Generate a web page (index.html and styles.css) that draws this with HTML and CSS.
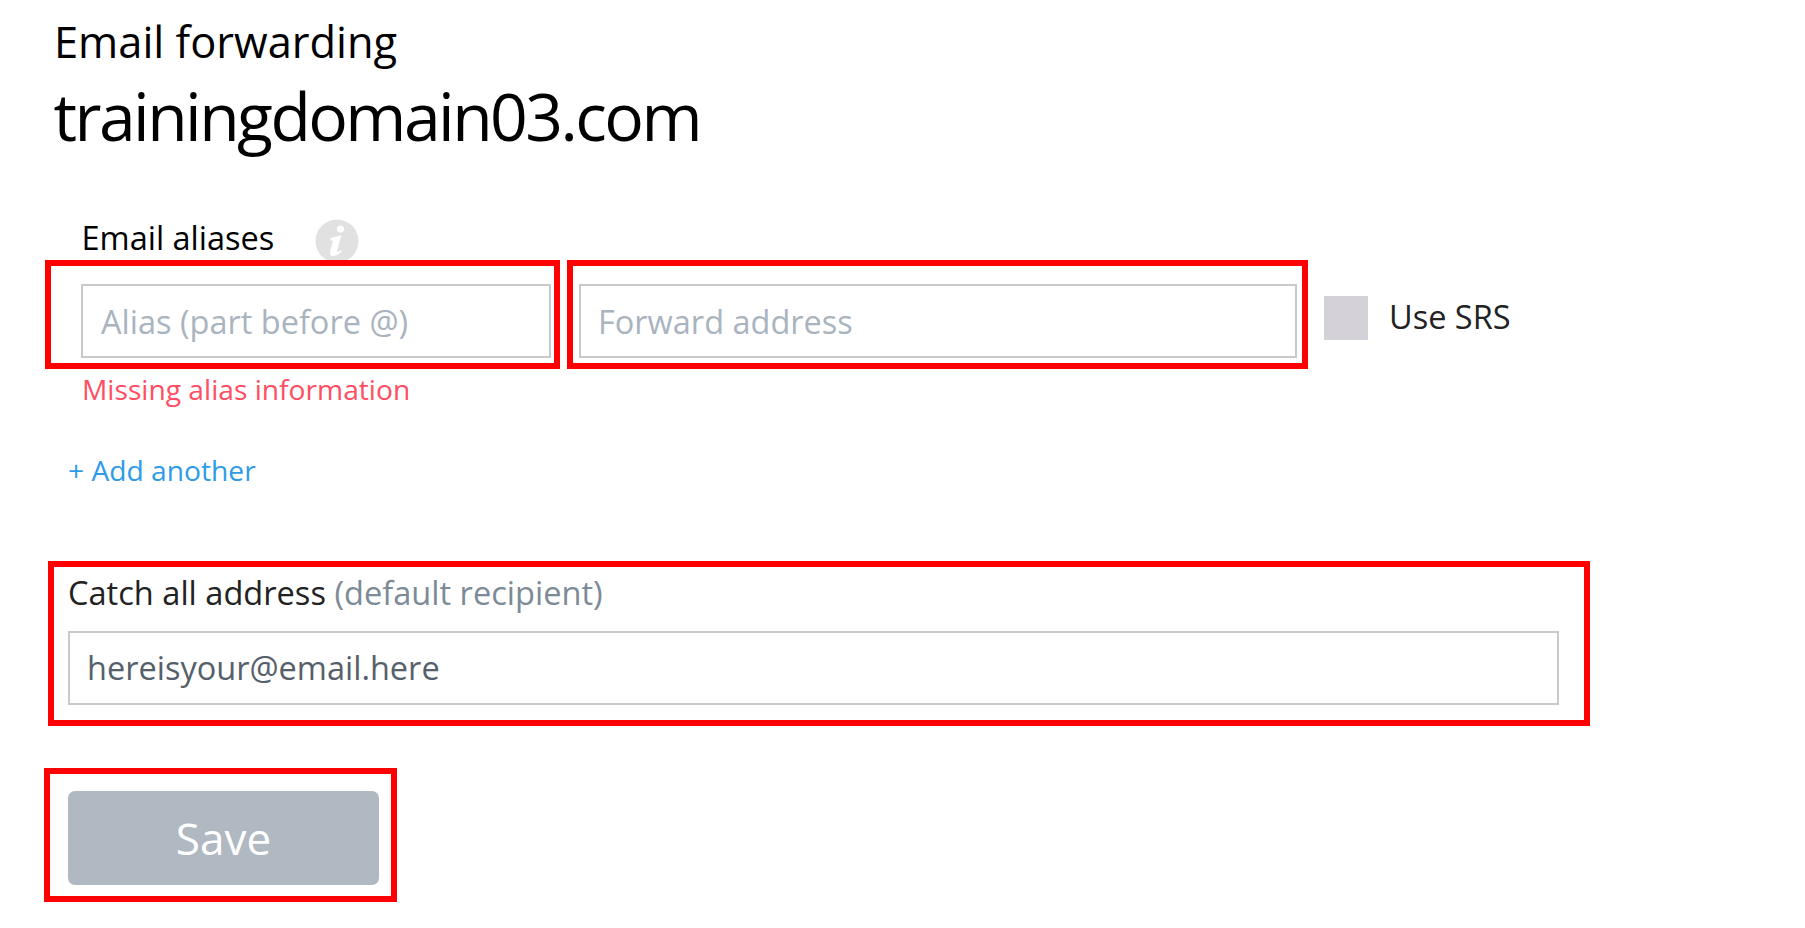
FILE: index.html
```html
<!DOCTYPE html>
<html lang="en">
<head>
<meta charset="utf-8">
<title>Email forwarding</title>
<link rel="stylesheet" href="styles.css">
</head>
<body>
<main class="page">
  <h2 class="eyebrow">Email forwarding</h2>
  <h1 class="domain">trainingdomain03.com</h1>
  <div class="alias-label">
    <span class="label-black">Email aliases</span>
    <svg class="info" viewBox="0 0 44 44" aria-hidden="true">
      <circle cx="22" cy="22" r="21.5" fill="#e1e1e1"/>
      <circle cx="25.5" cy="10" r="3.6" fill="#fff"/>
      <path d="M15.5 19 L26.5 16.2 L22 31.5 C21.6 33.2 22.6 33.6 26 31 L26.6 32.4 C23 36 19 37.6 16.6 36.8 C14.8 36.2 14.6 34.4 15.2 32 L18 21.8 L15.2 21.2 Z" fill="#fff"/>
    </svg>
  </div>
  <div class="alias-row">
    <div class="mark mark-alias">
      <input class="field" type="text" placeholder="Alias (part before @)">
    </div>
    <div class="mark mark-forward">
      <input class="field field-tight" type="text" placeholder="Forward address">
    </div>
    <div class="srs">
      <span class="check"></span>
      <span class="srs-text">Use SRS</span>
    </div>
  </div>
  <p class="error">Missing alias information</p>
  <a class="add" href="#">+ Add another</a>
  <div class="mark mark-catch">
    <div class="catch-label">Catch all address <span class="muted">(default recipient)</span></div>
    <input class="field field-tight field-catch" type="text" value="hereisyour@email.here">
  </div>
  <div class="mark mark-save">
    <button class="save" type="button">Save</button>
  </div>
</main>
</body>
</html>
```

FILE: styles.css
```css
* { box-sizing: border-box; }
html, body { margin: 0; padding: 0; background: #fff; height: 100%; overflow: hidden; }
body { font-family: "Open Sans", "Noto Sans", sans-serif; color: #000; }
.page { padding: 22px 0 0 44px; width: 1805px; }
.eyebrow { margin: 0 0 0 10px; font-size: 43.4px; font-weight: 400; line-height: 40px; height: 40px; letter-spacing: 0; }
.domain { margin: 15px 0 0 9.5px; font-size: 66px; font-weight: 400; line-height: 76px; height: 76px; letter-spacing: -2.55px; }
.alias-label { margin: 67px 0 0 37.5px; height: 40px; display: flex; align-items: flex-start; }
.label-black { font-size: 32.5px; line-height: 36px; width: 233.5px; }
.info { width: 44px; height: 44px; flex: none; margin-top: -1px; }
.alias-row { display: flex; align-items: flex-start; padding-left: 0.5px; }
.mark { position: relative; border: 6px solid #f00; }
.mark-alias { width: 515.5px; height: 109px; padding: 18px 3px 5px 30.5px; }
.mark-forward { width: 741px; height: 109px; margin-left: 7px; padding: 18px 5px 5px 6px; }
.field { display: block; width: 100%; height: 74px; border: 2px solid #c9c9c9; background: #fff; padding: 0 18px; font: 400 32.5px "Open Sans", sans-serif; color: #56606b; outline: none; border-radius: 0; }
.field-tight { padding-left: 17px; }
.field-catch { padding-bottom: 2px; }
.field::placeholder { color: #a9b4bf; opacity: 1; }
.srs { display: flex; align-items: center; margin: 36px 0 0 16px; }
.check { width: 44px; height: 44px; background: #d5d1d9; }
.srs-text { margin-left: 21px; font-size: 32.5px; line-height: 42px; height: 44px; color: #222; }
.error { margin: 1px 0 0 38px; font-size: 28.2px; line-height: 38px; height: 38px; color: #ff4d63; }
.add { display: block; margin: 43px 0 0 24px; font-size: 28.2px; line-height: 38px; color: #2d9be8; text-decoration: none; }
.mark-catch { margin: 72px 0 0 4px; width: 1541.5px; height: 165px; padding: 0 25px 15px 14px; }
.catch-label { font-size: 32.6px; line-height: 40px; height: 64px; padding-top: 5.5px; color: #222; }
.muted { color: #7d8a97; }
.mark-save { margin-top: 41.5px; width: 352.5px; height: 134.5px; padding: 17px 11px 10px 18px; }
.save { display: block; width: 311px; height: 94px; border: 0; border-radius: 7px; background: #b0b8c1; color: #fff; font: 400 44px "Open Sans", sans-serif; padding: 0; }
```
